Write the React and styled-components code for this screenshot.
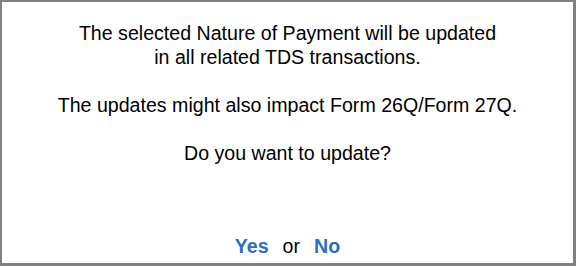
import React from 'react';
import styled, { createGlobalStyle } from 'styled-components';

const GlobalStyle = createGlobalStyle`
    html, body {
        margin: 0;
        padding: 0;
        background: #fff;
    }
`;

const Dialog = styled.div`
    box-sizing: border-box;
    width: 576px;
    height: 266px;
    display: flex;
    flex-direction: column;
    align-items: center;
    background: #fff;
    border-style: solid;
    border-color: #808080;
    border-width: 2px 3px 3px 2px;
    font-family: "Liberation Sans", Arial, sans-serif;
    font-size: 19.6px;
    line-height: 24px;
    color: #000;
`;

const Message = styled.div`
    padding-top: 19px;
    text-align: center;
    flex: 1;
`;

const Paragraph = styled.p`
    margin: 0 0 24px;
    white-space: nowrap;
`;

const Choices = styled.div`
    display: flex;
    align-items: baseline;
    gap: 14px;
    padding-bottom: 5px;
`;

const Choice = styled.span`
    color: #2f6cbd;
    font-weight: bold;
`;

const App = () =>
    <>
        <GlobalStyle />
        <Dialog>
            <Message>
                <Paragraph>
                    The selected Nature of Payment will be updated
                    <br />
                    in all related TDS transactions.
                </Paragraph>
                <Paragraph>The updates might also impact Form 26Q/Form 27Q.</Paragraph>
                <Paragraph>Do you want to update?</Paragraph>
            </Message>
            <Choices>
                <Choice>Yes</Choice>
                <span>or</span>
                <Choice>No</Choice>
            </Choices>
        </Dialog>
    </>;

export default App;
